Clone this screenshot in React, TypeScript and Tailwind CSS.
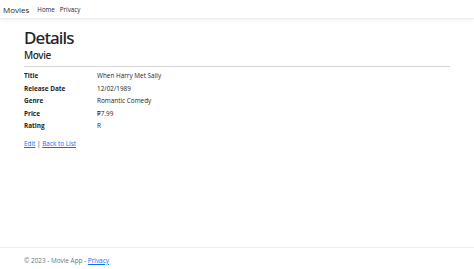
export default function App() {
  const rows: [string, string][] = [
    ["Title", "When Harry Met Sally"],
    ["Release Date", "12/02/1989"],
    ["Genre", "Romantic Comedy"],
    ["Price", "₱7.99"],
    ["Rating", "R"],
  ];
  return (
    <div className="relative h-[269px] w-[474px] overflow-hidden bg-white text-[#212529]" style={{ fontFamily: '"Open Sans", "Noto Sans", sans-serif' }}>
      <nav className="flex h-[19px] items-center border-b border-[#eeeeee] px-[3px] pt-[1px] shadow-[0_2px_4px_rgba(0,0,0,0.05)]">
        <span className="text-[8px] leading-none text-[#212529]">Movies</span>
        <span className="ml-[8px] mt-[1px] text-[6.2px] leading-none text-[#212529]">Home</span>
        <span className="ml-[5px] mt-[1px] text-[6.2px] leading-none text-[#212529]">Privacy</span>
      </nav>
      <main className="mx-[24px] w-[426px]">
        <h1 className="mt-[9px] text-[17px] font-medium leading-[20px] tracking-[-0.9px]" style={{ fontFamily: '"Noto Sans", sans-serif' }}>Details</h1>
        <h4 className="mt-[1px] text-[10px] font-medium leading-[13px] tracking-[-0.4px]" style={{ fontFamily: '"Noto Sans", sans-serif' }}>Movie</h4>
        <hr className="mt-[4px] border-t-[1px] border-[#d5d5d5]" />
        <dl className="mt-[5px] flex flex-col gap-[3.5px]">
          {rows.map(([k, v]) => (
            <div key={k} className="flex h-[9px] items-center text-[6.4px] leading-none">
              <dt className="w-[73px] font-bold text-[#212529]">{k}</dt>
              <dd className="text-[#212529]">{v}</dd>
            </div>
          ))}
        </dl>
        <div className="mt-[10px] text-[6.4px] leading-none text-[#212529]">
          <a className="text-[#0d6efd] underline">Edit</a> | <a className="text-[#0d6efd] underline">Back to List</a>
        </div>
      </main>
      <footer className="absolute bottom-0 left-0 right-0 h-[22px] border-t border-[#eeeeee]">
        <div className="ml-[24px] mt-[10px] text-[6.4px] leading-none text-[#6c757d]">
          © 2023 - Movie App - <a className="text-[#0d6efd] underline">Privacy</a>
        </div>
      </footer>
    </div>
  );
}
